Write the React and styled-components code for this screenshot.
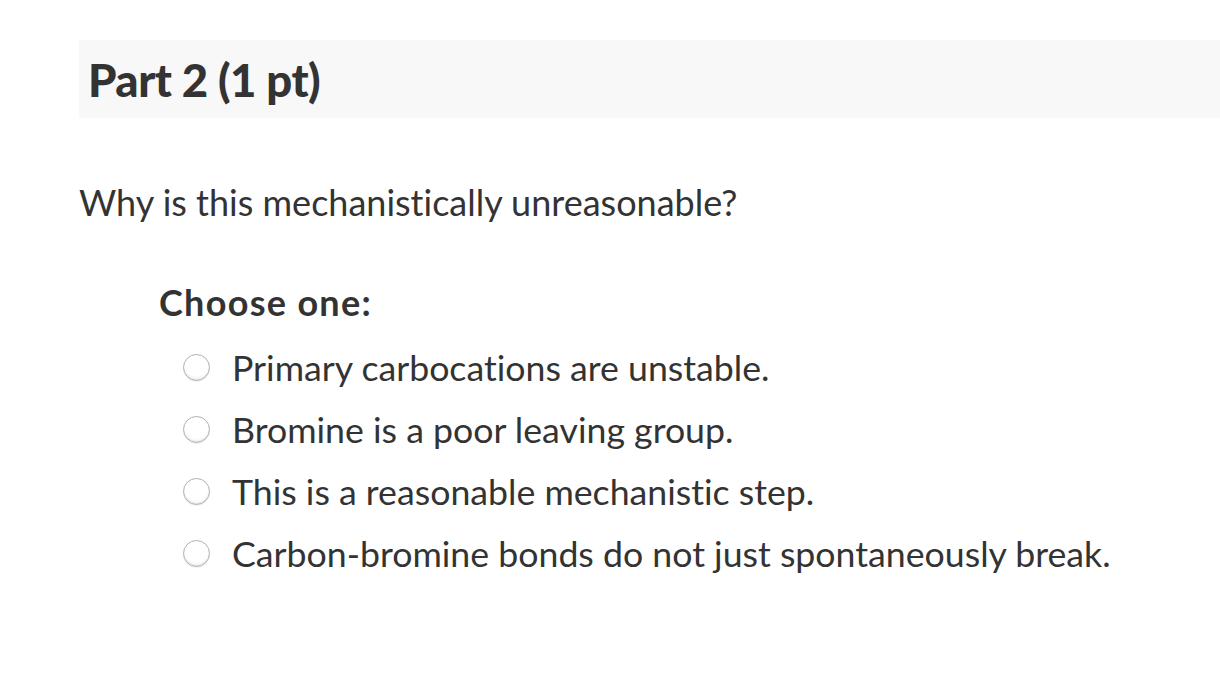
import React from 'react';
import styled, { createGlobalStyle } from 'styled-components';

const GlobalStyle = createGlobalStyle`
  html, body {
    margin: 0;
    padding: 0;
    background: #fff;
  }
  body {
    font-family: Lato, "Liberation Sans", sans-serif;
    font-variant-ligatures: none;
    color: #333;
  }
`;

const options = [
  'Primary carbocations are unstable.',
  'Bromine is a poor leaving group.',
  'This is a reasonable mechanistic step.',
  'Carbon-bromine bonds do not just spontaneously break.',
];

function App() {
  return (
    <Page>
      <GlobalStyle />
      <PartHeader>
        <h2>Part 2 (1 pt)</h2>
      </PartHeader>
      <Question>Why is this mechanistically unreasonable?</Question>
      <Choices>
        <Legend>Choose one:</Legend>
        {options.map((text) => (
          <Option key={text}>
            <Radio />
            <span>{text}</span>
          </Option>
        ))}
      </Choices>
    </Page>
  );
}

export default App;

const Page = styled.div`
  padding: 40px 0 0 79px;
  height: 696px;
  box-sizing: border-box;
`;

const PartHeader = styled.div`
  display: flex;
  align-items: center;
  height: 78px;
  padding-left: 9px;
  background-color: #f8f8f8;
  h2 {
    margin: 0;
    font-size: 45.5px;
    font-weight: 900;
    color: #333;
    letter-spacing: -0.5px;
  }
`;

const Question = styled.p`
  margin: 60px 0 0;
  font-size: 36px;
  line-height: 48px;
  color: #333;
`;

const Choices = styled.div`
  margin-top: 54px;
  padding-left: 80px;
`;

const Legend = styled.div`
  font-size: 36px;
  font-weight: 700;
  letter-spacing: 1.3px;
  line-height: 44px;
  margin-bottom: 12px;
`;

const Option = styled.label`
  display: flex;
  align-items: center;
  gap: 22px;
  height: 62px;
  padding-left: 24px;
  font-size: 35.7px;
  color: #333;
`;

const Radio = styled.span`
  width: 27px;
  height: 27px;
  flex: none;
  box-sizing: border-box;
  border-radius: 50%;
  border: 1px solid #b0b0b0;
  background: radial-gradient(circle at 50% 35%, #ffffff 55%, #ebebeb 100%);
  box-shadow: inset 0 -1px 1px rgba(0, 0, 0, 0.08), 0 1px 1px rgba(0, 0, 0, 0.05);
`;
